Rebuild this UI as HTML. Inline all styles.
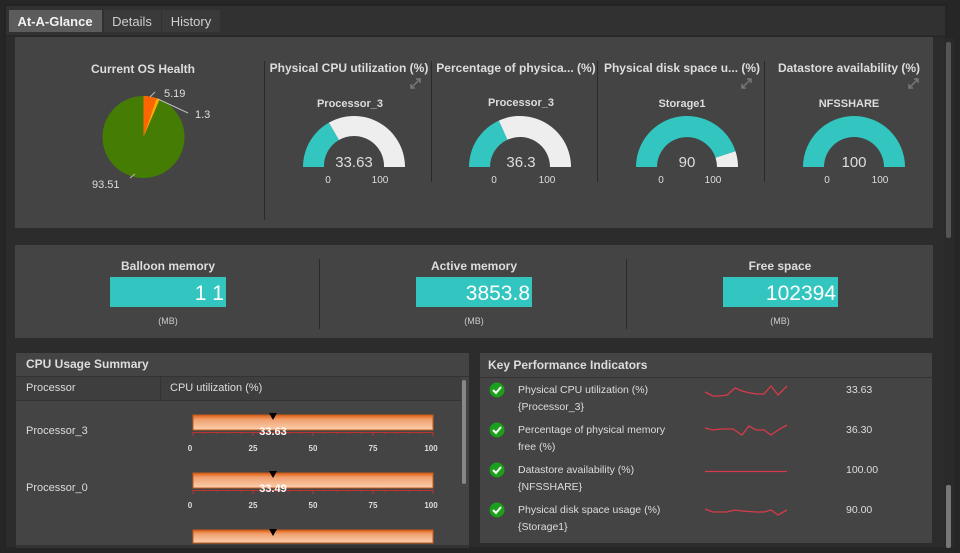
<!DOCTYPE html>
<html><head><meta charset="utf-8"><style>
body{margin:0;background:#252525;width:960px;height:548px;overflow:hidden;font-family:"Liberation Sans",sans-serif}
svg text{font-family:"Liberation Sans",sans-serif}
</style></head><body>
<svg width="960" height="548" xmlns="http://www.w3.org/2000/svg">
<rect x="0" y="0" width="960" height="548" fill="#262626"/>
<rect x="5" y="5" width="941" height="543" fill="#2c2c2c" stroke="#1e1e1e"/>
<rect x="6" y="6" width="939" height="30" fill="#313131"/>
<line x1="6" y1="36" x2="945" y2="36" stroke="#222"/>
<rect x="9" y="10" width="93" height="22" fill="#5c5c5c"/>
<rect x="104" y="10" width="57" height="22" fill="#3a3a3a"/>
<rect x="162" y="10" width="58" height="22" fill="#3a3a3a"/>
<text x="55" y="26" font-size="13" font-weight="bold" fill="#f2f2f2" text-anchor="middle">At-A-Glance</text>
<text x="132" y="26" font-size="13" fill="#cfcfcf" text-anchor="middle">Details</text>
<text x="191" y="26" font-size="13" fill="#cfcfcf" text-anchor="middle">History</text>
<rect x="944" y="38" width="10" height="510" fill="#2a2a2a"/>
<rect x="946" y="42" width="5" height="196" rx="2" fill="#555"/>
<rect x="946" y="485" width="5" height="63" rx="2" fill="#777"/>

<rect x="15" y="37" width="918" height="191" fill="#444"/>
<text x="143" y="73" font-size="12" font-weight="bold" fill="#ddd" text-anchor="middle">Current OS Health</text>
<circle cx="143.5" cy="137" r="41" fill="#447c04"/>
<path d="M143.5 137 L143.5 96 A41 41 0 0 1 156.6 98.2 Z" fill="#ff6600"/>
<path d="M143.5 137 L156.6 98.2 A41 41 0 0 1 159.7 99.3 Z" fill="#ffaa00"/>
<line x1="150" y1="97" x2="155" y2="92" stroke="#bbb"/>
<line x1="158" y1="99" x2="188" y2="113" stroke="#bbb"/>
<line x1="130" y1="178" x2="135" y2="174" stroke="#bbb"/>
<text x="164" y="97" font-size="11" fill="#ddd">5.19</text>
<text x="195" y="118" font-size="11" fill="#ddd">1.3</text>
<text x="92" y="188" font-size="11" fill="#ddd">93.51</text>
<line x1="264.5" y1="61" x2="264.5" y2="220" stroke="#2a2a2a"/>
<line x1="431.5" y1="61" x2="431.5" y2="182" stroke="#2a2a2a"/>
<line x1="597.5" y1="61" x2="597.5" y2="182" stroke="#2a2a2a"/>
<line x1="764.5" y1="61" x2="764.5" y2="182" stroke="#2a2a2a"/>
<g font-size="12" font-weight="bold" fill="#ddd" text-anchor="middle">
<text x="349" y="72">Physical CPU utilization (%)</text>
<text x="516" y="72">Percentage of physica... (%)</text>
<text x="682" y="72">Physical disk space u... (%)</text>
<text x="849" y="72">Datastore availability (%)</text>
<text x="350" y="107" font-size="11">Processor_3</text>
<text x="521" y="106" font-size="11">Processor_3</text>
<text x="682" y="107" font-size="11">Storage1</text>
<text x="849" y="107" font-size="11">NFSSHARE</text>
</g>
<g stroke="#777" stroke-width="1.5" fill="none">
<path d="M411 88 L420 79 M416 79 L420 79 L420 83 M411 84 L411 88 L415 88"/>
<path d="M742 88 L751 79 M747 79 L751 79 L751 83 M742 84 L742 88 L746 88"/>
<path d="M909 88 L918 79 M914 79 L918 79 L918 83 M909 84 L909 88 L913 88"/>
</g>
<path d="M303 167 A51 51 0 0 1 328.9 122.6 L339 140 A30 30 0 0 0 324 167 Z" fill="#33c6c0"/>
<path d="M328.9 122.6 A51 51 0 0 1 405 167 L384 167 A30 30 0 0 0 339 140 Z" fill="#eee"/>
<path d="M469 167 A51 51 0 0 1 498.8 120.6 L507.5 139.7 A30 30 0 0 0 490 167 Z" fill="#33c6c0"/>
<path d="M498.8 120.6 A51 51 0 0 1 571 167 L550 167 A30 30 0 0 0 507.5 139.7 Z" fill="#eee"/>
<path d="M636 167 A51 51 0 0 1 735.5 151.2 L715.5 157.7 A30 30 0 0 0 657 167 Z" fill="#33c6c0"/>
<path d="M735.5 151.2 A51 51 0 0 1 738 167 L717 167 A30 30 0 0 0 715.5 157.7 Z" fill="#eee"/>
<path d="M803 167 A51 51 0 0 1 905 167 L884 167 A30 30 0 0 0 824 167 Z" fill="#33c6c0"/>
<g font-size="15" fill="#ddd" text-anchor="middle">
<text x="354" y="167">33.63</text><text x="521" y="167">36.3</text>
<text x="687" y="167">90</text><text x="854" y="167">100</text>
</g>
<g font-size="10" fill="#ddd" text-anchor="middle">
<text x="328" y="183">0</text><text x="380" y="183">100</text>
<text x="494" y="183">0</text><text x="547" y="183">100</text>
<text x="661" y="183">0</text><text x="713" y="183">100</text>
<text x="827" y="183">0</text><text x="880" y="183">100</text>
</g>

<rect x="15" y="245" width="918" height="93" fill="#444"/>
<line x1="319.5" y1="259" x2="319.5" y2="329" stroke="#2a2a2a"/>
<line x1="626.5" y1="259" x2="626.5" y2="329" stroke="#2a2a2a"/>
<g font-size="12" font-weight="bold" fill="#ddd" text-anchor="middle">
<text x="168" y="270">Balloon memory</text><text x="474" y="270">Active memory</text><text x="780" y="270">Free space</text>
</g>
<rect x="110" y="277" width="116" height="30" fill="#33c6c0"/>
<rect x="416" y="277" width="116" height="30" fill="#33c6c0"/>
<rect x="723" y="277" width="115" height="30" fill="#33c6c0"/>
<g font-size="21" fill="#fff" text-anchor="end">
<text x="224" y="300" font-family="Liberation Mono,monospace">1 1</text>
<text x="530" y="300" font-family="Liberation Mono,monospace">3853.8</text>
<text x="836" y="300" font-family="Liberation Mono,monospace">102394</text>
</g>
<g font-size="9" fill="#ccc" text-anchor="middle">
<text x="168" y="324">(MB)</text><text x="474" y="324">(MB)</text><text x="780" y="324">(MB)</text>
</g>

<rect x="16" y="353" width="453" height="195" fill="#444"/>
<line x1="16" y1="376.5" x2="469" y2="376.5" stroke="#333"/>
<text x="26" y="368" font-size="12" font-weight="bold" fill="#ddd">CPU Usage Summary</text>
<rect x="16" y="377" width="445" height="23" fill="#3e3e3e"/>
<line x1="16" y1="400.5" x2="461" y2="400.5" stroke="#333"/>
<line x1="160.5" y1="377" x2="160.5" y2="400" stroke="#333"/>
<text x="26" y="391" font-size="11" fill="#ddd">Processor</text>
<text x="170" y="391" font-size="11" fill="#ddd">CPU utilization (%)</text>
<rect x="462" y="380" width="4" height="104" rx="2" fill="#888"/>
<defs><linearGradient id="og" x1="0" y1="0" x2="0" y2="1">
<stop offset="0" stop-color="#e06010"/><stop offset="0.3" stop-color="#f0a070"/><stop offset="1" stop-color="#fbd0b0"/></linearGradient></defs>
<text x="26" y="434" font-size="11" fill="#ddd">Processor_3</text>
<rect x="193" y="415" width="240" height="15" fill="url(#og)" stroke="#c75a1a"/>
<line x1="193" y1="432.5" x2="433" y2="432.5" stroke="#b33"/>
<path d="M193 432 v4 M253 432 v4 M313 432 v4 M373 432 v4 M433 432 v4 M205 432v2M217 432v2M229 432v2M241 432v2M265 432v2M277 432v2M289 432v2M301 432v2M325 432v2M337 432v2M349 432v2M361 432v2M385 432v2M397 432v2M409 432v2M421 432v2" stroke="#b33"/>
<path d="M269 413 h8 l-4 7 z" fill="#000"/>
<text x="273" y="435" font-size="11" font-weight="bold" fill="#fff" text-anchor="middle">33.63</text>
<g font-size="8" font-weight="bold" fill="#ddd" text-anchor="middle">
<text x="190" y="451">0</text><text x="253" y="451">25</text><text x="313" y="451">50</text><text x="373" y="451">75</text><text x="431" y="451">100</text></g>
<text x="26" y="491" font-size="11" fill="#ddd">Processor_0</text>
<rect x="193" y="473" width="240" height="15" fill="url(#og)" stroke="#c75a1a"/>
<line x1="193" y1="490.5" x2="433" y2="490.5" stroke="#b33"/>
<path d="M193 490 v4 M253 490 v4 M313 490 v4 M373 490 v4 M433 490 v4 M205 490v2M217 490v2M229 490v2M241 490v2M265 490v2M277 490v2M289 490v2M301 490v2M325 490v2M337 490v2M349 490v2M361 490v2M385 490v2M397 490v2M409 490v2M421 490v2" stroke="#b33"/>
<path d="M269 471 h8 l-4 7 z" fill="#000"/>
<text x="273" y="492" font-size="11" font-weight="bold" fill="#fff" text-anchor="middle">33.49</text>
<g font-size="8" font-weight="bold" fill="#ddd" text-anchor="middle">
<text x="190" y="508">0</text><text x="253" y="508">25</text><text x="313" y="508">50</text><text x="373" y="508">75</text><text x="431" y="508">100</text></g>
<rect x="193" y="530" width="240" height="13" fill="url(#og)" stroke="#c75a1a"/>
<path d="M269 529 h8 l-4 7 z" fill="#000"/>
<text x="26" y="553" font-size="11" fill="#ddd">Processor_1</text>
<rect x="16" y="545" width="453" height="3" fill="#333"/>

<rect x="480" y="353" width="452" height="190" fill="#444"/>
<line x1="480" y1="377.5" x2="932" y2="377.5" stroke="#333"/>
<text x="488" y="369" font-size="12" font-weight="bold" fill="#ddd">Key Performance Indicators</text>
<g fill="#1aa01a"><circle cx="497" cy="390" r="7.5"/><circle cx="497" cy="430" r="7.5"/><circle cx="497" cy="470" r="7.5"/><circle cx="497" cy="510" r="7.5"/></g>
<g stroke="#fff" stroke-width="2" fill="none">
<path d="M493 390 l3 3 l5 -6"/><path d="M493 430 l3 3 l5 -6"/><path d="M493 470 l3 3 l5 -6"/><path d="M493 510 l3 3 l5 -6"/></g>
<g font-size="10.5" fill="#ddd">
<text x="518" y="393">Physical CPU utilization (%)</text><text x="518" y="410">{Processor_3}</text>
<text x="518" y="433">Percentage of physical memory</text><text x="518" y="450">free (%)</text>
<text x="518" y="473">Datastore availability (%)</text><text x="518" y="490">{NFSSHARE}</text>
<text x="518" y="513">Physical disk space usage (%)</text><text x="518" y="530">{Storage1}</text>
<text x="846" y="393">33.63</text><text x="846" y="433">36.30</text><text x="846" y="473">100.00</text><text x="846" y="513">90.00</text>
</g>
<g stroke="#d83a4a" stroke-width="1.3" fill="none">
<path d="M705 392 L713 396 L720 396 L727 395 L735 388 L742 391 L750 393 L757 394 L764 394 L771 386 L778 395 L787 386"/>
<path d="M705 428 L713 430 L720 429 L727 429 L733 429 L742 435 L749 426 L756 430 L764 430 L771 435 L778 430 L787 425"/>
<path d="M705 471.5 L787 471.5"/>
<path d="M705 509 L713 512 L727 512 L735 510 L742 511 L756 512 L764 512 L771 510 L778 515 L787 510"/>
</g>
</svg>
</body></html>
